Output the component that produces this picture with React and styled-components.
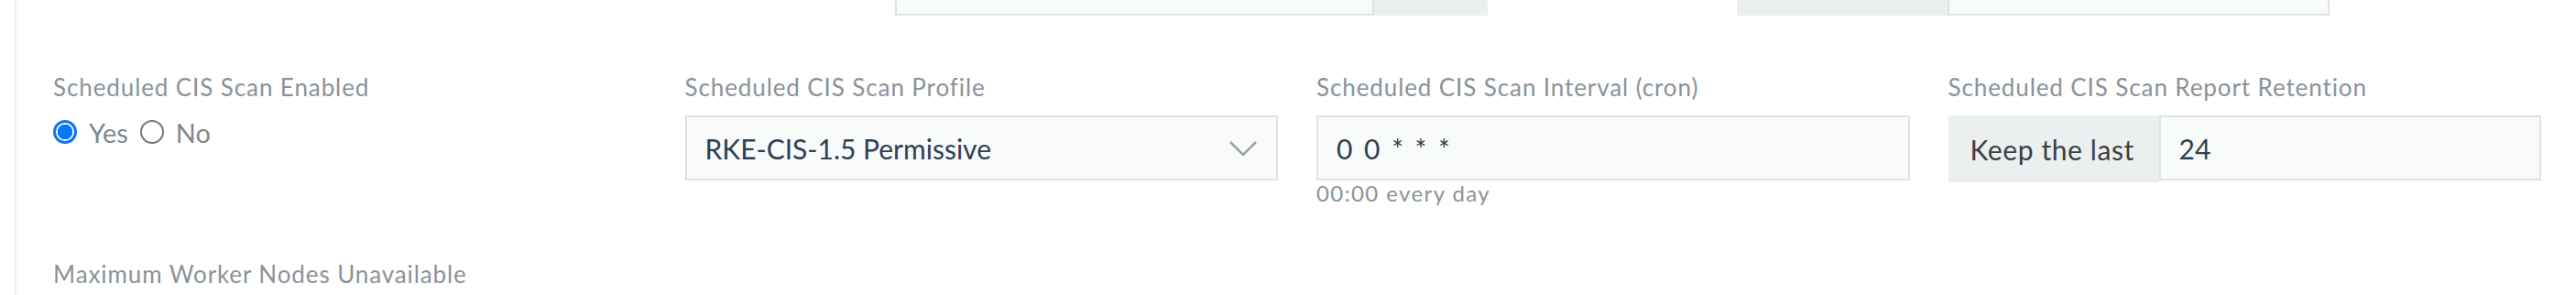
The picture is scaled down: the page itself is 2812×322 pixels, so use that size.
import React from 'react';
import styled, { createGlobalStyle } from 'styled-components';

const GlobalStyle = createGlobalStyle`
  html, body {
    margin: 0;
    padding: 0;
    background: #ffffff;
    font-family: Lato, "Noto Sans", sans-serif;
  }
`;

const Page = styled.div`
  margin-left: 16px;
  border-left: 2px solid #eef1f3;
  padding-left: 40px;
  width: 2716px;
  height: 322px;
  overflow: hidden;
`;

const TopRow = styled.div`
  display: flex;
  align-items: flex-end;
  height: 17px;
  overflow: hidden;
  padding-left: ${({ offset }) => offset}px;
  gap: ${({ gap }) => gap}px;
`;

const Group = styled.div`
  display: flex;
  flex: 0 0 auto;
  width: ${({ width }) => (width ? `${width}px` : 'auto')};
`;

const FieldRow = styled.div`
  display: grid;
  grid-template-columns: repeat(4, 1fr);
  column-gap: 42px;
  align-items: start;
  margin-top: ${({ top }) => top}px;
`;

const Field = styled.div`
  min-width: 0;
`;

const Label = styled.label`
  display: block;
  font-size: 26px;
  line-height: 36px;
  letter-spacing: 0.9px;
  color: #8a9298;
  margin-bottom: 13px;
  white-space: nowrap;
`;

const RadioGroup = styled.div`
  display: flex;
  align-items: center;
  height: 36px;
`;

const RadioOption = styled.label`
  display: flex;
  align-items: center;
  gap: 13px;
  margin-right: 13px;
  font-size: 29px;
  color: #80888e;
`;

const RadioDot = styled.span`
  width: 26px;
  height: 26px;
  box-sizing: border-box;
  border-radius: 50%;
  flex: 0 0 auto;
  border: ${({ checked }) => (checked ? '3px solid #0b75f8' : '2px solid #767676')};
  background: ${({ checked }) =>
    checked ? 'radial-gradient(circle, #0b75f8 0 8px, #ffffff 8.5px)' : '#ffffff'};
`;

const Box = styled.div`
  display: flex;
  align-items: center;
  box-sizing: border-box;
  height: ${({ h }) => h || 71}px;
  border: 2px solid #dce3e6;
  background: #f9fbfb;
  padding: 0 20px;
  font-size: 30px;
  word-spacing: ${({ spaced }) => (spaced ? '5px' : 'normal')};
  color: #2e4054;
  flex: 1 1 auto;
  min-width: 0;
  white-space: pre;
`;

const SelectBox = styled(Box)`
  justify-content: space-between;
`;

const Addon = styled.div`
  display: flex;
  align-items: center;
  box-sizing: border-box;
  height: ${({ h }) => h || 73}px;
  background: #ebeff0;
  padding: 0 24px;
  font-size: 30px;
  letter-spacing: 0.6px;
  color: #3c3f42;
  flex: 0 0 ${({ width }) => width}px;
  white-space: nowrap;
`;

const Hint = styled.div`
  font-size: 24px;
  line-height: 28px;
  letter-spacing: 1.4px;
  color: #8a9298;
`;

const Chevron = () => (
  <svg width="32" height="18" viewBox="0 0 32 18">
    <polyline points="2,2 16,16 30,2" fill="none" stroke="#9aa1a7" strokeWidth="2.5" />
  </svg>
);

export default function App() {
  return (
    <>
      <GlobalStyle />
      <Page>
        <TopRow offset={919} gap={272}>
          <Group width={647}>
            <Box h={72} />
            <Addon width={124} h={72} />
          </Group>
          <Group width={647}>
            <Addon width={230} h={72} />
            <Box h={72} />
          </Group>
        </TopRow>

        <FieldRow top={60}>
          <Field>
            <Label>Scheduled CIS Scan Enabled</Label>
            <RadioGroup>
              <RadioOption>
                <RadioDot checked />
                Yes
              </RadioOption>
              <RadioOption>
                <RadioDot />
                No
              </RadioOption>
            </RadioGroup>
          </Field>
          <Field>
            <Label>Scheduled CIS Scan Profile</Label>
            <SelectBox>
              <span>RKE-CIS-1.5 Permissive</span>
              <Chevron />
            </SelectBox>
          </Field>
          <Field>
            <Label>Scheduled CIS Scan Interval (cron)</Label>
            <Box spaced>0 0 * * *</Box>
            <Hint>00:00 every day</Hint>
          </Field>
          <Field>
            <Label>Scheduled CIS Scan Report Retention</Label>
            <Group>
              <Addon width={230}>Keep the last</Addon>
              <Box>24</Box>
            </Group>
          </Field>
        </FieldRow>

        <FieldRow top={56}>
          <Field>
            <Label>Maximum Worker Nodes Unavailable</Label>
          </Field>
        </FieldRow>
      </Page>
    </>
  );
}
